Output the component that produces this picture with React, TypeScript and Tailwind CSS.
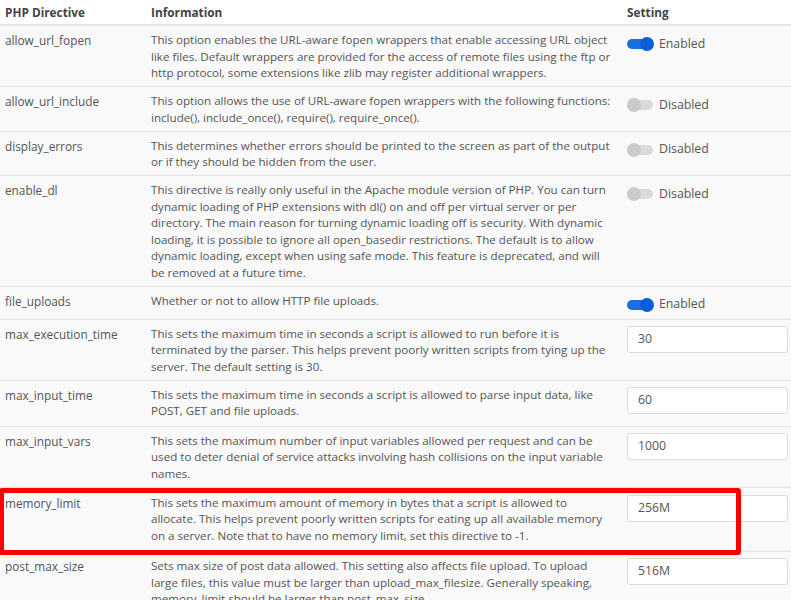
type Setting =
  | { kind: "toggle"; on: boolean }
  | { kind: "input"; value: string };

interface Directive {
  name: string;
  info: string;
  setting: Setting;
  marked?: boolean;
}

const directives: Directive[] = [
  {
    name: "allow_url_fopen",
    info: "This option enables the URL-aware fopen wrappers that enable accessing URL object like files. Default wrappers are provided for the access of remote files using the ftp or http protocol, some extensions like zlib may register additional wrappers.",
    setting: { kind: "toggle", on: true },
  },
  {
    name: "allow_url_include",
    info: "This option allows the use of URL-aware fopen wrappers with the following functions: include(), include_once(), require(), require_once().",
    setting: { kind: "toggle", on: false },
  },
  {
    name: "display_errors",
    info: "This determines whether errors should be printed to the screen as part of the output or if they should be hidden from the user.",
    setting: { kind: "toggle", on: false },
  },
  {
    name: "enable_dl",
    info: "This directive is really only useful in the Apache module version of PHP. You can turn dynamic loading of PHP extensions with dl() on and off per virtual server or per directory. The main reason for turning dynamic loading off is security. With dynamic loading, it is possible to ignore all open_basedir restrictions. The default is to allow dynamic loading, except when using safe mode. This feature is deprecated, and will be removed at a future time.",
    setting: { kind: "toggle", on: false },
  },
  {
    name: "file_uploads",
    info: "Whether or not to allow HTTP file uploads.",
    setting: { kind: "toggle", on: true },
  },
  {
    name: "max_execution_time",
    info: "This sets the maximum time in seconds a script is allowed to run before it is terminated by the parser. This helps prevent poorly written scripts from tying up the server. The default setting is 30.",
    setting: { kind: "input", value: "30" },
  },
  {
    name: "max_input_time",
    info: "This sets the maximum time in seconds a script is allowed to parse input data, like POST, GET and file uploads.",
    setting: { kind: "input", value: "60" },
  },
  {
    name: "max_input_vars",
    info: "This sets the maximum number of input variables allowed per request and can be used to deter denial of service attacks involving hash collisions on the input variable names.",
    setting: { kind: "input", value: "1000" },
  },
  {
    name: "memory_limit",
    info: "This sets the maximum amount of memory in bytes that a script is allowed to allocate. This helps prevent poorly written scripts for eating up all available memory on a server. Note that to have no memory limit, set this directive to -1.",
    setting: { kind: "input", value: "256M" },
    marked: true,
  },
  {
    name: "post_max_size",
    info: "Sets max size of post data allowed. This setting also affects file upload. To upload large files, this value must be larger than upload_max_filesize. Generally speaking, memory_limit should be larger than post_max_size.",
    setting: { kind: "input", value: "516M" },
  },
];

// ── Setting controls ──────────────────────────────────────────────────────────

function Toggle({ on }: { on: boolean }) {
  return (
    <div className="flex items-center h-[22px] mt-[1px] mb-[3px] gap-[5px]">
      <div className="relative w-[27px] h-[14px] flex items-center">
        <div
          className={`w-[26px] h-[10px] rounded-full ${on ? "bg-[#1a6fe0]" : "bg-[#dadada]"}`}
        />
        <div
          className={`absolute top-0 w-[14px] h-[14px] rounded-full ${
            on ? "right-0 bg-[#0b5ed7]" : "left-0 bg-[#cbcbcb]"
          }`}
        />
      </div>
      <span className="text-[12.3px] text-[#555]">{on ? "Enabled" : "Disabled"}</span>
    </div>
  );
}

function ValueInput({ value }: { value: string }) {
  return (
    <div className="h-[27px] w-[161px] mb-[12px] rounded-[3px] border border-[#dcdcdc] bg-white flex items-center px-[10px] text-[12.3px] text-[#555]">
      {value}
    </div>
  );
}

// ── Row ───────────────────────────────────────────────────────────────────────

function Row({ d }: { d: Directive }) {
  const pad = d.marked ? "pt-[7px] pb-[7px]" : "pt-[6px] pb-[4.5px]";
  return (
    <div className="relative flex border-b border-[#e3e3e3] bg-[#f9f9f9]">
      <div className={`w-[145px] shrink-0 pl-[5px] text-[11.8px] ${pad}`}>{d.name}</div>
      <div className={`w-[476px] shrink-0 pl-[6px] ${pad}`}>
        <p className={d.marked ? "w-[456px]" : "w-[465px]"}>{d.info}</p>
      </div>
      <div className={`flex-1 pl-[6px] ${d.marked ? "pt-[7px]" : "pt-[6px]"}`}>
        {d.setting.kind === "toggle" ? (
          <Toggle on={d.setting.on} />
        ) : (
          <ValueInput value={d.setting.value} />
        )}
      </div>
      {d.marked && (
        <div className="absolute z-10 -left-[1px] top-0 w-[742px] h-[67px] rounded-[3px] border-[5px] border-[#ff0000]" />
      )}
    </div>
  );
}

// ── Main ──────────────────────────────────────────────────────────────────────

export default function App() {
  return (
    <div
      className="w-[791px] h-[600px] overflow-hidden bg-white text-[11.6px] leading-[16.5px] text-[#555]"
      style={{ fontFamily: '"Open Sans", "Noto Sans", sans-serif' }}
    >
      <div className="flex h-[26px] items-center border-b-2 border-[#e6e6e6] bg-white font-bold text-[11.8px] text-[#444]">
        <div className="w-[145px] shrink-0 pl-[5px]">PHP Directive</div>
        <div className="w-[476px] shrink-0 pl-[6px]">Information</div>
        <div className="flex-1 pl-[6px]">Setting</div>
      </div>
      {directives.map((d) => (
        <Row key={d.name} d={d} />
      ))}
    </div>
  );
}
